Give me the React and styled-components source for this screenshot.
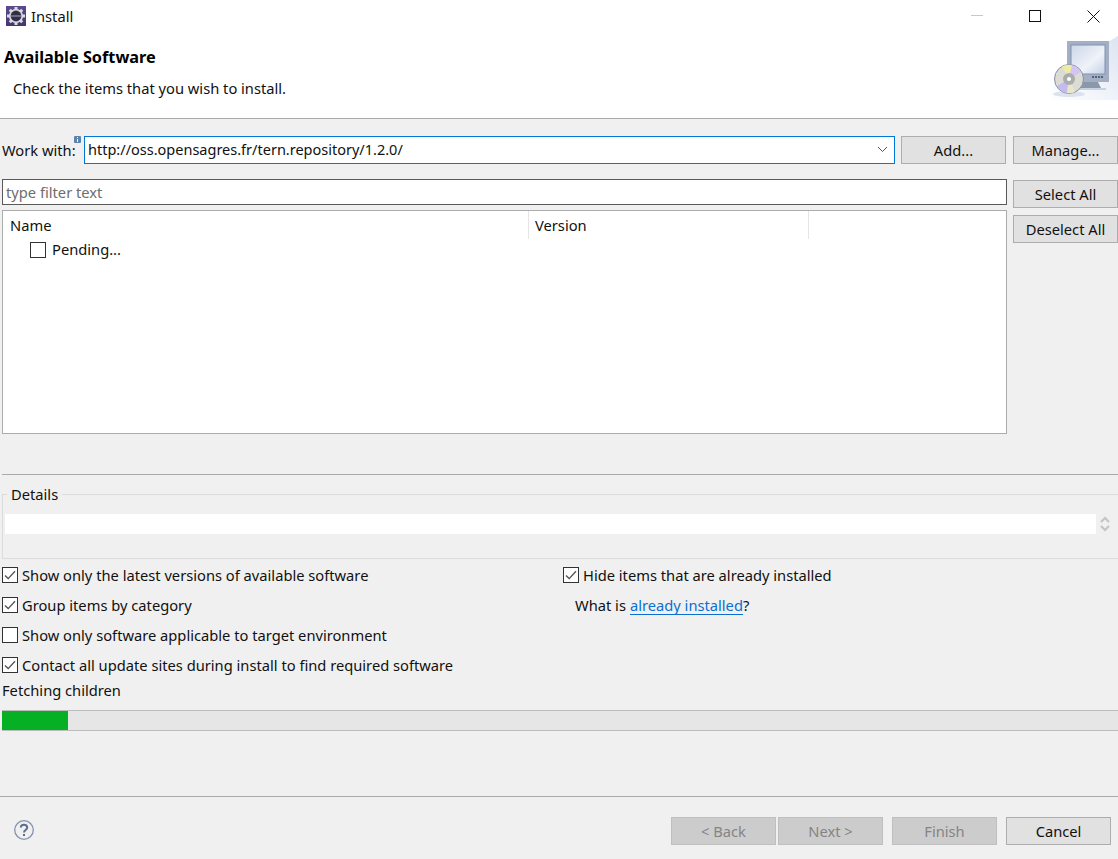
import React from "react";
import styled, { createGlobalStyle } from "styled-components";

const GlobalStyle = createGlobalStyle`
  html, body {
    margin: 0;
    padding: 0;
    background: #f0f0f0;
  }
  * {
    box-sizing: border-box;
  }
`;

const Page = styled.div`
  width: 1118px;
  height: 859px;
  overflow: hidden;
  display: flex;
  flex-direction: column;
  background: #f0f0f0;
  color: #111;
  font-family: "Noto Sans", "Open Sans", sans-serif;
  font-size: 14.7px;
  line-height: 20px;
`;

const Header = styled.header`
  height: 119px;
  flex: none;
  background: #fff;
  border-bottom: 1px solid #a9a9a9;
`;

const TitleBar = styled.div`
  height: 32px;
  display: flex;
  align-items: center;
  padding-left: 6px;
  gap: 5px;
`;

const TitleText = styled.span`
  flex: 1;
`;

const WindowControls = styled.div`
  display: flex;
  margin-right: -4px;
`;

const WindowButton = styled.div`
  width: 58px;
  height: 32px;
  display: flex;
  align-items: center;
  justify-content: center;
`;

const Banner = styled.div`
  display: flex;
  justify-content: space-between;
  padding-left: 4px;
  height: 86px;
`;

const BannerTitle = styled.h1`
  margin: 15px 0 0;
  font-size: 16.3px;
  line-height: 20px;
  font-weight: 700;
  color: #000;
`;

const BannerText = styled.p`
  margin: 11px 0 0 9px;
`;

const BannerImage = styled.svg`
  margin-top: 4px;
  flex: none;
`;

const WorkRow = styled.div`
  display: flex;
  align-items: center;
  margin-top: 17px;
  padding-left: 2px;
  height: 28px;
`;

const WorkLabel = styled.div`
  width: 82px;
  height: 28px;
  flex: none;
  position: relative;
  display: flex;
  align-items: center;
`;

const InfoBadge = styled.svg`
  position: absolute;
  top: 0;
  right: 3px;
`;

const Combo = styled.div`
  width: 811px;
  height: 28px;
  flex: none;
  display: flex;
  align-items: center;
  justify-content: space-between;
  padding: 0 6px 2px 3px;
  background: #fff;
  border: 1px solid #0078d7;
  font-size: 14.5px;
`;

const Button = styled.div`
  width: 105px;
  height: 28px;
  flex: none;
  display: flex;
  align-items: center;
  justify-content: center;
  background: ${(p) => (p.$disabled ? "#cccccc" : "#e1e1e1")};
  border: 1px solid ${(p) => (p.$disabled ? "#bfbfbf" : "#adadad")};
  color: ${(p) => (p.$disabled ? "#848484" : "#111")};
`;

const AddButton = styled(Button)`
  margin-left: 6px;
`;

const ManageButton = styled(Button)`
  margin-left: 7px;
`;

const Middle = styled.div`
  display: grid;
  grid-template-columns: 1005px 105px;
  column-gap: 6px;
  margin-top: 15px;
  padding-left: 2px;
`;

const LeftColumn = styled.div`
  display: flex;
  flex-direction: column;
  gap: 5px;
`;

const RightColumn = styled.div`
  display: flex;
  flex-direction: column;
  gap: 7px;
  padding-top: 1px;
`;

const FilterInput = styled.div`
  height: 26px;
  display: flex;
  align-items: center;
  padding-left: 3px;
  background: #fff;
  border: 1px solid #5a5a5a;
  color: #6d6d6d;
`;

const TreeTable = styled.div`
  height: 224px;
  background: #fff;
  border: 1px solid #acacac;
`;

const TableHead = styled.div`
  display: grid;
  grid-template-columns: 526px 280px 1fr;
  height: 28px;
`;

const HeadCell = styled.div`
  display: flex;
  align-items: center;
  padding-left: ${(p) => (p.$first ? "7px" : "6px")};
  border-right: ${(p) => (p.$last ? "none" : "1px solid #e5e5e5")};
`;

const TreeRow = styled.div`
  display: flex;
  align-items: center;
  gap: 6px;
  padding-left: 27px;
  height: 22px;
`;

const TreeLabel = styled.span`
  padding-bottom: 2px;
`;

const Box = styled.span`
  width: 16px;
  height: 16px;
  flex: none;
  display: flex;
  align-items: center;
  justify-content: center;
  background: #fff;
  border: 1px solid #333;
`;

const Rule = styled.div`
  height: 1px;
  flex: none;
  margin: ${(p) => p.$top}px 0 0 2px;
  background: #a9a9a9;
`;

const DetailsGroup = styled.fieldset`
  margin: 9px 0 0 2px;
  padding: 0 0 0 2px;
  height: 75px;
  flex: none;
  border: none;
  border-top: 1px solid #dcdcdc;
  border-bottom: 1px solid #dcdcdc;
  border-left: 1px solid #dcdcdc;
  min-width: 0;
`;

const DetailsLegend = styled.legend`
  margin-left: 2px;
  padding: 0 4px;
  line-height: 20px;
`;

const DetailsRow = styled.div`
  display: flex;
  align-items: center;
  margin-top: 10px;
`;

const DetailsField = styled.div`
  width: 1091px;
  height: 20px;
  background: #fff;
`;

const Spinner = styled.svg`
  margin-left: 4px;
`;

const Options = styled.div`
  display: grid;
  grid-template-columns: 561px 1fr;
  grid-auto-rows: 30px;
  margin-top: 1px;
  padding-left: 2px;
`;

const Option = styled.label`
  display: flex;
  align-items: center;
  gap: 4px;
  grid-column: ${(p) => p.$col};
  grid-row: ${(p) => p.$row};
`;

const WhatIs = styled.div`
  display: flex;
  align-items: center;
  padding-left: 12px;
  grid-column: 2;
  grid-row: 2;
`;

const Link = styled.span`
  color: #0a6fd0;
  border-bottom: 1px solid #0a6fd0;
  line-height: 18px;
  margin-left: 4px;
`;

const Status = styled.div`
  padding-left: 2px;
  height: 20px;
  flex: none;
`;

const Progress = styled.div`
  height: 21px;
  flex: none;
  margin: 10px 0 0 2px;
  background: #e6e6e6;
  border-top: 1px solid #bcbcbc;
  border-bottom: 1px solid #bcbcbc;
`;

const ProgressFill = styled.div`
  height: 100%;
  background: #06b025;
`;

const Footer = styled.footer`
  margin-top: 65px;
  flex: none;
  border-top: 1px solid #a9a9a9;
  display: flex;
  align-items: center;
  height: 63px;
  padding: 6px 7px 0 14px;
`;

const HelpIcon = styled.svg`
  flex: none;
  margin: 0 auto 2px 0;
`;

const NavGroup = styled.div`
  display: flex;
  gap: 2px;
  margin-right: 9px;
`;

const FinishGroup = styled.div`
  margin-right: 9px;
`;

const Check = () => (
  <svg width="12" height="10" viewBox="0 0 12 10">
    <path d="M1 5.5 L4.2 8.6 L11 1.2" fill="none" stroke="#555" strokeWidth="1.4" />
  </svg>
);

const CheckOption = ({ col = 1, row, checked, children }) => (
  <Option $col={col} $row={row}>
    <Box>{checked && <Check />}</Box>
    <span>{children}</span>
  </Option>
);

const AppIcon = () => (
  <svg width="20" height="20" viewBox="0 0 20 20">
    <defs>
      <linearGradient id="appBg" x1="0" y1="0" x2="0" y2="1">
        <stop offset="0" stopColor="#5b4b8f" />
        <stop offset="1" stopColor="#44366f" />
      </linearGradient>
    </defs>
    <rect width="20" height="20" fill="url(#appBg)" />
    <g stroke="#dcdcdc" strokeWidth="3">
      <path d="M10 1V19M1 10H19M3.8 3.8L16.2 16.2M16.2 3.8L3.8 16.2" />
    </g>
    <circle cx="10" cy="10" r="7" fill="#dcdcdc" />
    <circle cx="10" cy="10" r="5.4" fill="#2f2f45" />
    <rect x="5" y="9" width="10" height="2" fill="#6c6a8e" />
  </svg>
);

const MonitorArt = () => (
  <BannerImage width="70" height="65" viewBox="0 0 70 65">
    <defs>
      <linearGradient id="bannerBg" x1="0" y1="1" x2="1" y2="0">
        <stop offset="0" stopColor="#ffffff" />
        <stop offset="1" stopColor="#dde5f3" />
      </linearGradient>
      <linearGradient id="screen" x1="0" y1="0" x2="1" y2="1">
        <stop offset="0" stopColor="#cbd6e8" />
        <stop offset="0.6" stopColor="#eff3f9" />
        <stop offset="1" stopColor="#c3d0e5" />
      </linearGradient>
    </defs>
    <path d="M0 64 L12 34 L70 0 V64 Z" fill="url(#bannerBg)" />
    <rect x="19" y="5" width="42" height="41" fill="#a4afc3" />
    <rect x="23" y="9" width="34" height="29" fill="url(#screen)" stroke="#7f93b5" />
    <path d="M34 46H50L53 52H31Z" fill="#8b97ab" />
    <rect x="28" y="52" width="30" height="2" fill="#c9d2e0" />
    <path d="M44 40h2v2h-2zM47 40h2v2h-2zM50 40h2v2h-2zM53 40h2v2h-2z" fill="#55627a" />
    <ellipse cx="21" cy="58" rx="16" ry="3" fill="#dde2ec" />
    <circle cx="21" cy="43" r="14.5" fill="#dcdcd4" stroke="#8290a8" />
    <path d="M21 43L14 30.5A14 14 0 0 1 24 29.3Z" fill="#eeeaa8" />
    <path d="M21 43L24 29.3A14 14 0 0 1 33 36Z" fill="#d4c4f4" />
    <path d="M21 43L9 50A14 14 0 0 0 19 57Z" fill="#c4bcf0" />
    <path d="M21 43L19 57A14 14 0 0 0 27 56Z" fill="#e8e8c8" />
    <circle cx="21" cy="43" r="6" fill="#a9aead" />
    <circle cx="21" cy="43" r="2" fill="#ffffff" />
  </BannerImage>
);

const App = () => {
  return (
    <Page>
      <GlobalStyle />
      <Header>
        <TitleBar>
          <AppIcon />
          <TitleText>Install</TitleText>
          <WindowControls>
            <WindowButton>
              <svg width="12" height="2" viewBox="0 0 12 2">
                <rect width="12" height="1" fill="#c8c8c8" />
              </svg>
            </WindowButton>
            <WindowButton>
              <svg width="12" height="12" viewBox="0 0 12 12">
                <rect x="0.5" y="0.5" width="11" height="11" fill="none" stroke="#111" />
              </svg>
            </WindowButton>
            <WindowButton>
              <svg width="13" height="13" viewBox="0 0 13 13">
                <path d="M0.5 0.5L12.5 12.5M12.5 0.5L0.5 12.5" stroke="#111" fill="none" />
              </svg>
            </WindowButton>
          </WindowControls>
        </TitleBar>
        <Banner>
          <div>
            <BannerTitle>Available Software</BannerTitle>
            <BannerText>Check the items that you wish to install.</BannerText>
          </div>
          <MonitorArt />
        </Banner>
      </Header>

      <WorkRow>
        <WorkLabel>
          Work with:
          <InfoBadge width="7" height="8" viewBox="0 0 7 8">
            <rect width="7" height="7" rx="1" fill="#5d83ad" />
            <path d="M3 1h1v1H3zM3 3h1v3H3z" fill="#fff" />
          </InfoBadge>
        </WorkLabel>
        <Combo>
          <span>http://oss.opensagres.fr/tern.repository/1.2.0/</span>
          <svg width="11" height="7" viewBox="0 0 11 7">
            <path d="M1 1L5.5 5.5L10 1" fill="none" stroke="#555" />
          </svg>
        </Combo>
        <AddButton>Add...</AddButton>
        <ManageButton>Manage...</ManageButton>
      </WorkRow>

      <Middle>
        <LeftColumn>
          <FilterInput>type filter text</FilterInput>
          <TreeTable>
            <TableHead>
              <HeadCell $first>Name</HeadCell>
              <HeadCell>Version</HeadCell>
              <HeadCell $last />
            </TableHead>
            <TreeRow>
              <Box />
              <TreeLabel>Pending...</TreeLabel>
            </TreeRow>
          </TreeTable>
        </LeftColumn>
        <RightColumn>
          <Button>Select All</Button>
          <Button>Deselect All</Button>
        </RightColumn>
      </Middle>

      <Rule $top={40} />

      <DetailsGroup>
        <DetailsLegend>Details</DetailsLegend>
        <DetailsRow>
          <DetailsField />
          <Spinner width="10" height="16" viewBox="0 0 10 16">
            <path d="M1 6L5 2L9 6M1 10L5 14L9 10" fill="none" stroke="#c4c4c4" strokeWidth="2" />
          </Spinner>
        </DetailsRow>
      </DetailsGroup>

      <Options>
        <CheckOption row={1} checked>Show only the latest versions of available software</CheckOption>
        <CheckOption row={2} checked>Group items by category</CheckOption>
        <CheckOption row={3}>Show only software applicable to target environment</CheckOption>
        <CheckOption row={4} checked>Contact all update sites during install to find required software</CheckOption>
        <CheckOption col={2} row={1} checked>Hide items that are already installed</CheckOption>
        <WhatIs>
          What is <Link>already installed</Link>?
        </WhatIs>
      </Options>

      <Status>Fetching children</Status>
      <Progress>
        <ProgressFill style={{ width: 66 }} />
      </Progress>

      <Footer>
        <HelpIcon width="20" height="20" viewBox="0 0 20 20">
          <circle cx="10" cy="10" r="9.3" fill="none" stroke="#8494ad" strokeWidth="1.3" />
          <path d="M6.8 7.6C6.8 3.8 13.2 3.8 13.2 7.6C13.2 10 10 10 10 12.5" fill="none" stroke="#5c6f8c" strokeWidth="2" />
          <rect x="9" y="14" width="2" height="2" fill="#5c6f8c" />
        </HelpIcon>
        <NavGroup>
          <Button $disabled>&lt; Back</Button>
          <Button $disabled>Next &gt;</Button>
        </NavGroup>
        <FinishGroup>
          <Button $disabled>Finish</Button>
        </FinishGroup>
        <Button>Cancel</Button>
      </Footer>
    </Page>
  );
};

export default App;
